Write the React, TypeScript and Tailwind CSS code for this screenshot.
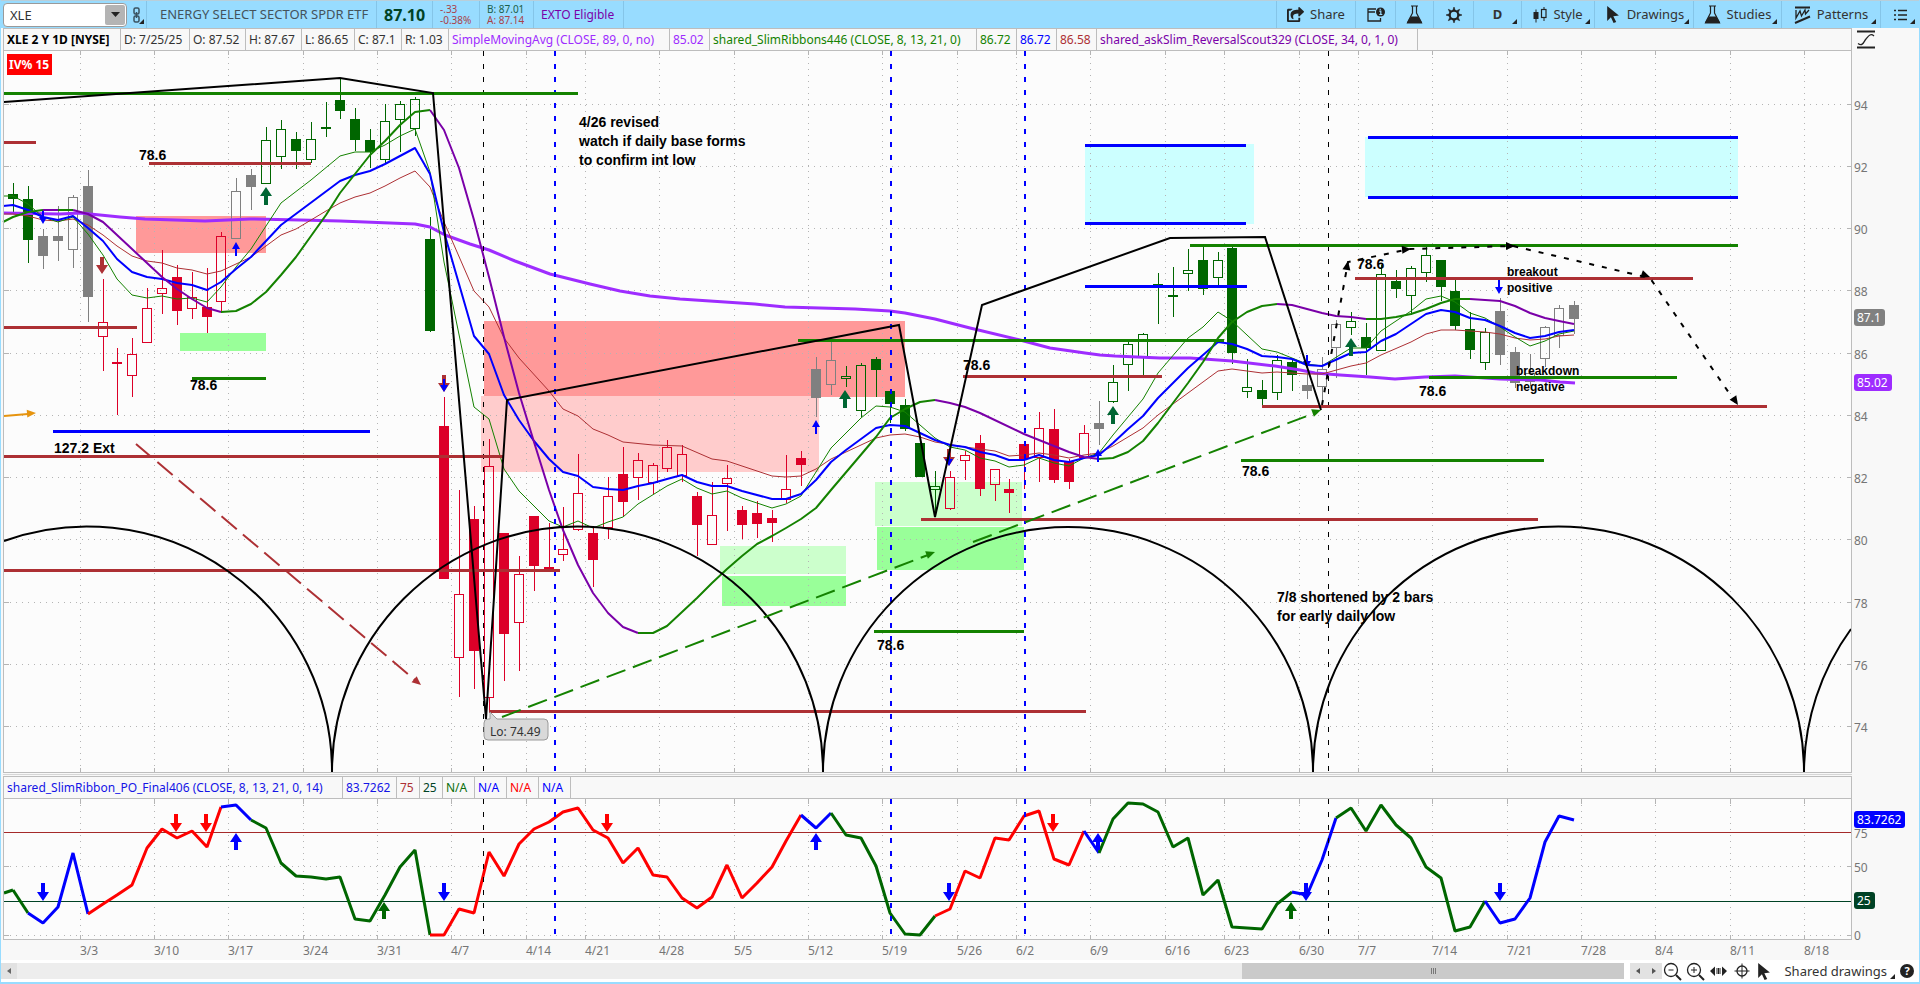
import type { ReactNode } from "react"
import { FaShareSquare } from "react-icons/fa"

const FONT = "font-['Noto_Sans','Open_Sans',sans-serif]"

const BRICK = "#ad3034"
const LEAF = "#148200"
const BLUE = "#0000ff"
const VIOLET = "#7a00a8"
const ORCHID = "#9e2cff"
const PINE = "#006600"
const CRIMSON = "#dc0028"
const GREY = "#808080"

const barX = (i: number) => 13.3 + 14.867 * i

type Kind = "G" | "g" | "R" | "r" | "N" | "n"
type Candle = [Kind, number, number, number, number]

// kind (capital = filled), high, body top, body bottom, low
const candles: Candle[] = [
  ["G", 183, 194, 199, 212], ["G", 186, 199, 240, 263], ["N", 229, 236, 256, 269], ["N", 206, 236, 241, 261],
  ["n", 195, 197, 250, 268], ["N", 170, 186, 297, 322], ["r", 279, 322, 337, 371], ["R", 348, 362, 364, 415],
  ["r", 338, 354, 376, 397], ["r", 288, 308, 343, 343], ["r", 250, 288, 294, 314], ["R", 265, 277, 311, 325],
  ["r", 272, 297, 309, 319], ["R", 268, 307, 317, 333], ["r", 232, 236, 302, 313], ["n", 178, 191, 239, 239],
  ["N", 169, 175, 187, 210], ["g", 127, 140, 184, 184], ["g", 120, 129, 157, 169], ["G", 132, 139, 151, 169],
  ["g", 122, 139, 160, 163], ["G", 102, 127, 129, 137], ["G", 78, 100, 111, 119], ["G", 108, 119, 140, 151],
  ["G", 129, 140, 152, 168], ["g", 104, 121, 160, 164], ["g", 101, 104, 120, 152], ["g", 97, 99, 129, 136],
  ["G", 217, 239, 331, 332], ["R", 397, 426, 579, 579], ["r", 490, 594, 658, 697], ["R", 506, 519, 651, 689],
  ["r", 439, 466, 698, 712], ["R", 533, 533, 634, 681], ["r", 556, 574, 623, 671], ["R", 516, 516, 566, 591],
  ["R", 523, 567, 571, 571], ["r", 507, 549, 555, 561], ["r", 454, 493, 530, 531], ["R", 527, 533, 560, 587],
  ["r", 477, 496, 528, 539], ["R", 447, 474, 502, 517], ["r", 453, 460, 478, 500], ["r", 463, 465, 483, 494],
  ["r", 440, 447, 469, 472], ["r", 445, 454, 476, 482], ["R", 492, 496, 525, 556], ["r", 482, 515, 545, 545],
  ["r", 465, 478, 484, 531], ["R", 506, 510, 525, 539], ["R", 501, 513, 524, 538], ["R", 510, 518, 523, 542],
  ["r", 455, 489, 500, 503], ["R", 451, 458, 465, 486], ["N", 357, 369, 398, 417], ["n", 341, 360, 385, 395],
  ["g", 366, 376, 379, 387], ["g", 363, 365, 411, 417], ["G", 357, 359, 370, 397], ["G", 391, 391, 404, 423],
  ["G", 399, 405, 429, 431], ["G", 443, 443, 477, 477], ["g", 471, 486, 490, 517], ["r", 471, 477, 509, 510],
  ["r", 451, 455, 461, 480], ["R", 435, 443, 489, 496], ["r", 469, 469, 485, 501], ["R", 479, 489, 493, 513],
  ["R", 444, 444, 459, 489], ["r", 412, 428, 458, 482], ["R", 409, 429, 480, 483], ["R", 459, 461, 482, 489],
  ["r", 425, 433, 458, 458], ["N", 401, 423, 429, 445], ["g", 365, 382, 402, 403], ["g", 342, 344, 365, 391],
  ["g", 333, 334, 357, 376], ["G", 273, 284, 285, 324], ["G", 267, 295, 297, 317], ["g", 249, 270, 274, 291],
  ["G", 246, 260, 289, 295], ["g", 252, 260, 278, 285], ["G", 246, 248, 353, 364], ["g", 359, 387, 392, 398],
  ["G", 380, 390, 399, 407], ["g", 355, 360, 393, 400], ["G", 360, 362, 375, 391], ["N", 373, 385, 391, 399],
  ["n", 357, 369, 387, 407], ["n", 320, 324, 348, 378], ["g", 312, 321, 328, 335], ["G", 323, 337, 348, 375],
  ["g", 265, 274, 351, 351], ["G", 270, 281, 289, 298], ["g", 266, 268, 296, 315], ["g", 246, 255, 273, 282],
  ["G", 260, 260, 287, 301], ["G", 280, 291, 326, 330], ["G", 312, 329, 350, 359], ["g", 328, 332, 363, 370],
  ["N", 298, 311, 355, 365], ["N", 347, 352, 383, 388], ["n", 354, 373, 382, 386], ["n", 326, 327, 359, 367],
  ["n", 305, 308, 336, 348], ["N", 301, 305, 319, 334],
]

type Pt = [number, number]

const sma89: Pt[] = [
  [3, 213], [60, 214], [80, 213], [120, 217], [145, 219], [205, 221], [250, 219], [300, 220], [340, 221], [415, 224],
  [430, 227], [445, 235], [470, 244], [489, 250], [515, 261], [550, 274], [590, 284], [620, 291], [650, 296],
  [680, 299], [755, 304], [785, 307], [855, 309], [890, 311], [905, 313], [935, 319], [970, 328], [1020, 340],
  [1050, 348], [1085, 353], [1100, 355], [1115, 356], [1160, 358], [1190, 358], [1232, 361], [1275, 366],
  [1300, 370], [1315, 373], [1340, 375], [1370, 377], [1395, 379], [1425, 377], [1455, 376], [1500, 379],
  [1540, 380], [1560, 382], [1575, 383],
]

// bar index, y
const fast: Pt[] = [
  [-0.7, 196], [0, 196], [1, 204], [2, 217], [3, 222], [4, 217], [5, 234], [6, 255], [7, 279], [8, 295], [9, 298],
  [10, 296], [11, 299], [12, 298], [13, 302], [14, 287], [15, 267], [16, 249], [17, 226], [18, 203], [20, 180],
  [22, 156], [23, 152], [24, 152], [25, 145], [26, 136], [27, 129], [28, 172], [29, 262], [31, 407], [32, 419],
  [33, 469], [34, 491], [36, 521], [37, 527], [38, 521], [39, 528], [40, 522], [41, 517], [42, 504], [44, 486],
  [45, 479], [46, 488], [47, 494], [48, 491], [49, 498], [51, 508], [52, 504], [53, 496], [54, 472], [55, 448],
  [57, 418], [58, 406], [59, 407], [60, 412], [61, 425], [62, 438], [63, 447], [64, 450], [65, 458], [66, 461],
  [67, 467], [68, 465], [69, 458], [70, 463], [71, 466], [72, 458], [73, 453], [74, 435], [75, 417], [76, 399],
  [77, 373], [79, 338], [80, 327], [81, 312], [82, 321], [84, 349], [85, 352], [86, 358], [87, 364], [88, 366],
  [90, 348], [91, 348], [92, 331], [94, 311], [95, 299], [96, 296], [97, 302], [98, 313], [99, 318], [100, 327],
  [101, 337], [102, 346], [103, 341], [104, 334], [105, 331],
]

const mid: Pt[] = [
  [-0.7, 206], [0, 205], [1, 210], [2, 217], [3, 220], [4, 216], [5, 228], [6, 241], [7, 259], [8, 272], [9, 277],
  [10, 279], [11, 283], [12, 285], [13, 290], [14, 282], [15, 269], [16, 257], [17, 241], [18, 225], [22, 181],
  [23, 175], [24, 171], [25, 164], [26, 156], [27, 148], [28, 174], [29, 232], [31, 336], [32, 354], [33, 395],
  [34, 420], [35, 441], [36, 459], [37, 472], [38, 476], [39, 487], [40, 489], [41, 490], [42, 486], [43, 483],
  [44, 479], [45, 475], [46, 482], [47, 486], [48, 486], [49, 491], [51, 499], [52, 499], [53, 494], [54, 480],
  [55, 462], [56, 450], [57, 439], [58, 428], [59, 425], [60, 426], [61, 433], [62, 440], [63, 445], [64, 447],
  [65, 452], [66, 455], [67, 460], [68, 460], [69, 455], [70, 460], [71, 462], [72, 458], [73, 455], [74, 443],
  [75, 429], [76, 416], [77, 398], [78, 383], [79, 368], [80, 355], [81, 342], [82, 344], [83, 349], [84, 356],
  [85, 357], [86, 359], [87, 365], [88, 366], [90, 353], [91, 352], [92, 341], [93, 334], [95, 314], [96, 310],
  [97, 312], [98, 318], [99, 320], [100, 326], [101, 333], [102, 338], [103, 336], [104, 332], [105, 330],
]

const slow: Pt[] = [
  [-0.7, 214], [0, 214], [1, 216], [2, 220], [3, 221], [4, 219], [5, 225], [6, 235], [7, 246], [8, 256], [9, 261],
  [10, 263], [11, 268], [12, 270], [13, 274], [14, 271], [15, 264], [16, 257], [17, 246], [18, 235], [19, 229],
  [20, 220], [21, 211], [22, 203], [23, 197], [24, 193], [25, 186], [26, 178], [27, 171], [28, 187], [29, 222],
  [31, 291], [32, 307], [33, 338], [34, 358], [36, 391], [37, 409], [38, 416], [39, 429], [40, 435], [41, 442],
  [43, 445], [45, 446], [47, 459], [48, 461], [51, 476], [52, 477], [53, 476], [54, 469], [55, 459], [58, 438],
  [59, 435], [60, 434], [61, 437], [62, 442], [64, 447], [65, 449], [66, 451], [67, 456], [68, 455], [69, 453],
  [70, 455], [71, 458], [72, 455], [73, 453], [74, 446], [76, 428], [77, 415], [78, 404], [79, 393], [80, 382],
  [81, 371], [82, 369], [84, 373], [85, 372], [87, 374], [88, 374], [90, 366], [91, 363], [92, 355], [94, 342],
  [95, 334], [96, 330], [97, 330], [98, 331], [99, 332], [100, 334], [101, 338], [102, 340], [103, 339],
  [104, 336], [105, 335],
]

const scout: { up: boolean; pts: Pt[] }[] = [
  { up: true, pts: [[-0.7, 222], [0, 217], [1, 212], [2, 210]] },
  { up: false, pts: [[2, 210], [3, 210]] },
  { up: true, pts: [[3, 210], [4, 210]] },
  { up: false, pts: [[4, 210], [5, 214], [6, 222], [7, 235], [8, 249], [9, 263], [10, 277], [11, 289], [12, 299], [13, 308], [14, 312]] },
  { up: true, pts: [[14, 312], [15, 311], [16, 304], [17, 292], [18, 275], [19, 257], [20, 236], [21, 215], [22, 193], [23, 174], [24, 155], [25, 141], [26, 125], [27, 112], [28, 110]] },
  { up: false, pts: [[28, 110], [29, 130], [30, 168], [31, 220], [32, 277], [33, 337], [34, 393], [35, 442], [36, 490], [37, 530], [38, 565], [39, 593], [40, 613], [41, 627], [42, 633]] },
  { up: true, pts: [[42, 633], [43, 633], [44, 626], [45, 612], [46, 598], [47, 583], [48, 569], [49, 556], [50, 544], [51, 536], [52, 528], [53, 519], [54, 508], [55, 490], [58, 437], [59, 418], [60, 409], [61, 402], [62, 400]] },
  { up: false, pts: [[62, 400], [63, 403], [64, 407], [65, 413], [68, 434], [71, 452], [72, 457], [73, 459]] },
  { up: true, pts: [[73, 459], [74, 458], [75, 452], [76, 441], [77, 423], [78, 403], [79, 383], [80, 362], [81, 338], [82, 322], [83, 312], [84, 306], [85, 304]] },
  { up: false, pts: [[85, 304], [86, 305], [87, 309], [88, 313], [89, 316], [90, 317], [91, 319]] },
  { up: true, pts: [[91, 319], [92, 319], [93, 317], [94, 314], [95, 309], [96, 303], [97, 299], [98, 299]] },
  { up: false, pts: [[98, 299], [99, 300], [100, 301], [101, 306], [102, 313], [103, 318], [104, 321], [105, 324]] },
]

// x, y, width, height, fill
const zones: [number, number, number, number, string][] = [
  [136, 216, 130, 37, "#ff9999"],
  [484, 321, 421, 76, "#ff9999"],
  [481, 396, 338, 76, "#ffcccc"],
  [180, 333, 86, 18, "#99ff99"],
  [720, 546, 126, 28, "#ccffcc"],
  [722, 576, 124, 30, "#99ff99"],
  [875, 482, 147, 44, "#ccffcc"],
  [877, 527, 147, 43, "#99ff99"],
  [1085, 144, 169, 80, "#ccffff"],
  [1365, 137, 373, 60, "#ccffff"],
]

// x1, x2, y, colour
const levels: [number, number, number, string][] = [
  [4, 578, 93, LEAF], [4, 36, 142, BRICK], [149, 311, 163, BRICK], [4, 137, 327, BRICK], [192, 266, 378, LEAF],
  [53, 370, 431, BLUE], [4, 503, 456, BRICK], [4, 560, 570, BRICK], [798, 1224, 340, LEAF], [963, 1162, 376, BRICK],
  [921, 1538, 519, BRICK], [489, 1086, 711, BRICK], [874, 1024, 631, LEAF], [1262, 1767, 406, BRICK],
  [1241, 1544, 460, LEAF], [1355, 1693, 278, BRICK], [1190, 1738, 245, LEAF], [1429, 1677, 377, LEAF],
  [1085, 1246, 145, BLUE], [1085, 1246, 223, BLUE], [1085, 1247, 286, BLUE], [1368, 1738, 137, BLUE],
  [1368, 1738, 197, BLUE],
]

const notes: [number, number, string][] = [
  [139, 160, "78.6"], [190, 390, "78.6"], [54, 453, "127.2 Ext"], [579, 127, "4/26 revised"],
  [579, 146, "watch if daily base forms"], [579, 165, "to confirm int low"], [963, 370, "78.6"],
  [877, 650, "78.6"], [1242, 476, "78.6"], [1357, 269, "78.6"], [1419, 396, "78.6"],
  [1277, 602, "7/8 shortened by 2 bars"], [1277, 621, "for early daily low"],
]

const smallNotes: [number, number, string][] = [
  [1507, 276, "breakout"], [1507, 292, "positive"], [1516, 375, "breakdown"], [1516, 391, "negative"],
]

const dates: [number, string][] = [
  [80, "3/3"], [154, "3/10"], [228, "3/17"], [303, "3/24"], [377, "3/31"], [451, "4/7"], [526, "4/14"],
  [585, "4/21"], [659, "4/28"], [734, "5/5"], [808, "5/12"], [882, "5/19"], [957, "5/26"], [1016, "6/2"],
  [1090, "6/9"], [1165, "6/16"], [1224, "6/23"], [1299, "6/30"], [1358, "7/7"], [1432, "7/14"], [1507, "7/21"],
  [1581, "7/28"], [1655, "8/4"], [1730, "8/11"], [1804, "8/18"],
]

const prices: [number, string][] = [
  [104, "94"], [166, "92"], [228, "90"], [290, "88"], [353, "86"], [415, "84"], [477, "82"], [539, "80"],
  [602, "78"], [664, "76"], [726, "74"],
]

const po = [
  890, 913, 923, 907, 853, 914, 904, 895, 885, 848, 829, 838, 831, 847, 807, 805, 820, 828, 863, 876, 877, 879, 877,
  919, 921, 895, 867, 850, 935, 935, 909, 913, 852, 876, 844, 829, 822, 812, 808, 830, 838, 863, 848, 875, 877, 898,
  908, 897, 865, 898, 883, 867, 841, 815, 828, 813, 835, 838, 866, 913, 934, 935, 916, 909, 871, 878, 838, 840, 816,
  811, 859, 865, 831, 853, 819, 803, 804, 812, 847, 838, 895, 880, 927, 928, 929, 904, 892, 895, 860, 818, 808, 831,
  805, 825, 838, 867, 878, 931, 927, 901, 923, 919, 898, 842, 816, 820,
]

// first bar, last bar, colour
const poRuns: [number, number, string][] = [
  [0, 1, PINE], [1, 5, BLUE], [5, 14, "#ff0000"], [14, 16, BLUE], [16, 28, PINE], [28, 53, "#ff0000"], [53, 55, BLUE],
  [55, 62, PINE], [62, 72, "#ff0000"], [72, 73, BLUE], [73, 86, PINE], [86, 89, BLUE], [89, 99, PINE], [99, 105, BLUE],
]

const kindColor = (k: Kind) => (k === "G" || k === "g" ? PINE : k === "R" || k === "r" ? CRIMSON : GREY)
const join = (pts: Pt[]) => pts.map((p) => p.join(",")).join(" ")
const byBar = (pts: Pt[]) => join(pts.map(([i, y]) => [Math.round(barX(i)), y] as Pt))

function CandleMark({ i, c }: { i: number; c: Candle }) {
  const [kind, high, top, bottom, low] = c
  const x = Math.round(barX(i))
  const color = kindColor(kind)
  const filled = kind === kind.toUpperCase()
  return (
    <g shapeRendering="crispEdges">
      {top > high && <rect x={x} y={high} width={1} height={top - high} fill={color} />}
      {low > bottom && <rect x={x} y={bottom} width={1} height={low - bottom} fill={color} />}
      {filled ? (
        <rect x={x - 5} y={top} width={10} height={Math.max(bottom - top, 1)} fill={color} />
      ) : (
        <rect x={x - 4.5} y={top + 0.5} width={9} height={bottom - top - 1} fill="none" stroke={color} />
      )}
    </g>
  )
}

function Signal({ x, y, h, dir, color, thin }: { x: number; y: number; h: number; dir: "up" | "down"; color: string; thin?: boolean }) {
  const w = thin ? 4 : 6
  const s = thin ? 1 : 2
  const head = thin ? 7 : 9
  const d =
    dir === "up"
      ? `M${x} ${y}L${x + w} ${y + head}H${x + s}V${y + h}H${x - s}V${y + head}H${x - w}Z`
      : `M${x} ${y + h}L${x + w} ${y + h - head}H${x + s}V${y}H${x - s}V${y + h - head}H${x - w}Z`
  return <path d={d} fill={color} />
}

function Head({ x, y, angle, color }: { x: number; y: number; angle: number; color: string }) {
  return <path d="M0 0L-9 -4V4Z" fill={color} transform={`translate(${x} ${y}) rotate(${angle})`} />
}

function Badge({ x, y, w, fill, label }: { x: number; y: number; w: number; fill: string; label: string }) {
  return (
    <g>
      <rect x={x} y={y} width={w} height={17} rx={3} fill={fill} />
      <text x={x + 3} y={y + 13} fill="#ffffff" fontSize={12}>
        {label}
      </text>
    </g>
  )
}

function TimeMarks({ y1, y2 }: { y1: number; y2: number }) {
  return (
    <g strokeDasharray="5 8">
      {[483, 1328].map((x) => (
        <line key={x} x1={x + 0.5} x2={x + 0.5} y1={y1} y2={y2} stroke="#000000" />
      ))}
      {[555, 891, 1025].map((x) => (
        <line key={x} x1={x} x2={x} y1={y1} y2={y2} stroke={BLUE} strokeWidth={2} />
      ))}
    </g>
  )
}

function PriceChart() {
  return (
    <svg viewBox="1 51 1918 725" className={`block h-auto w-full ${FONT}`} role="img" aria-label="XLE daily price">
      <rect x={3} y={51} width={1848} height={721} fill="#fcfcfc" />
      {zones.map(([x, y, w, h, fill]) => (
        <rect key={`${x}-${y}`} x={x} y={y} width={w} height={h} fill={fill} />
      ))}
      <g stroke="#b4b4b4" shapeRendering="crispEdges">
        {dates.map(([x]) => (
          <g key={x}>
            <line x1={x + 0.5} x2={x + 0.5} y1={57} y2={768} strokeDasharray="1 5" />
            <line x1={x + 0.5} x2={x + 0.5} y1={51} y2={55} />
            <line x1={x + 0.5} x2={x + 0.5} y1={768} y2={772} />
          </g>
        ))}
        {prices.map(([y]) => (
          <g key={y}>
            <line x1={10} x2={1842} y1={y + 0.5} y2={y + 0.5} strokeDasharray="1 5" />
            <line x1={4} x2={9} y1={y + 0.5} y2={y + 0.5} />
            <line x1={1847} x2={1851} y1={y + 0.5} y2={y + 0.5} />
          </g>
        ))}
      </g>

      {candles.map((c, i) => (
        <CandleMark key={i} i={i} c={c} />
      ))}

      <g fill="none" strokeLinejoin="round">
        <polyline points={join(sma89)} stroke={ORCHID} strokeWidth={3} />
        <polyline points={byBar(slow)} stroke={BRICK} strokeWidth={1} />
        <polyline points={byBar(fast)} stroke={LEAF} strokeWidth={1} />
        <polyline points={byBar(mid)} stroke={BLUE} strokeWidth={2} />
        {scout.map((s, i) => (
          <polyline key={i} points={byBar(s.pts)} stroke={s.up ? LEAF : VIOLET} strokeWidth={2} />
        ))}
      </g>

      <Signal x={43} y={211} h={13} dir="down" color={BLUE} thin />
      <Signal x={102} y={257} h={17} dir="down" color={BRICK} />
      <Signal x={266} y={187} h={18} dir="up" color="#006633" />
      <Signal x={236} y={242} h={14} dir="up" color={BLUE} thin />
      <Signal x={444} y={375} h={17} dir="down" color={BRICK} />
      <Signal x={444} y={379} h={13} dir="down" color={BLUE} thin />
      <Signal x={845} y={390} h={18} dir="up" color="#006633" />
      <Signal x={816} y={420} h={14} dir="up" color={BLUE} thin />
      <Signal x={949} y={449} h={17} dir="down" color={BRICK} />
      <Signal x={949} y={453} h={13} dir="down" color={BLUE} thin />
      <Signal x={1098} y={449} h={13} dir="up" color={BLUE} thin />
      <Signal x={1113} y={406} h={18} dir="up" color="#006633" />
      <Signal x={1307} y={355} h={13} dir="down" color={BLUE} thin />
      <Signal x={1351} y={338} h={18} dir="up" color="#006633" />
      <Signal x={1499} y={280} h={14} dir="down" color={BLUE} thin />

      <TimeMarks y1={51} y2={772} />

      <g shapeRendering="crispEdges">
        {levels.map(([x1, x2, y, color]) => (
          <rect key={`${x1}-${y}`} x={x1} y={y - 1} width={x2 - x1} height={3} fill={color} />
        ))}
      </g>

      <g fill="none" stroke="#000000" strokeWidth={2}>
        <path d="M4 541A245 245 0 0 1 332 772A245 245 0 0 1 823 772A245 245 0 0 1 1313 772A245 245 0 0 1 1804 772A245 245 0 0 1 1851 629" />
        <polyline points="4,102 340,78 433,93 486,719 507,400 899,325 935,517 982,305 1170,238 1265,237 1321,410" />
        <polyline points="1322,405 1348,262 1410,249 1513,246 1650,278 1738,406" strokeDasharray="5 8" />
      </g>
      <Head x={1348} y={261} angle={-80} color="#000000" />
      <Head x={1411} y={249} angle={-5} color="#000000" />
      <Head x={1515} y={246} angle={0} color="#000000" />
      <Head x={1650} y={277} angle={20} color="#000000" />
      <Head x={1738} y={405} angle={56} color="#000000" />

      <g fill="none" strokeWidth={2} strokeDasharray="20 8">
        <line x1={136} y1={444} x2={415} y2={680} stroke={BRICK} />
        <line x1={502} y1={717} x2={928} y2={555} stroke={LEAF} />
        <line x1={973} y1={542} x2={1315} y2={413} stroke={LEAF} />
      </g>
      <Head x={421} y={685} angle={40} color={BRICK} />
      <Head x={935} y={552} angle={-20} color={LEAF} />
      <Head x={1321} y={410} angle={-20} color={LEAF} />
      <line x1={4} y1={416} x2={28} y2={414} stroke="#e6940f" strokeWidth={2} />
      <Head x={36} y={413} angle={-4} color="#e6940f" />

      <g className="font-['Liberation_Sans',Arial,sans-serif]" fontWeight={700} fill="#000000">
        {notes.map(([x, y, t]) => (
          <text key={`${x}-${y}`} x={x} y={y} fontSize={14}>
            {t}
          </text>
        ))}
        {smallNotes.map(([x, y, t]) => (
          <text key={`${x}-${y}`} x={x} y={y} fontSize={12}>
            {t}
          </text>
        ))}
      </g>

      <path
        d="M488 719H490L490 712L497 719H544A4 4 0 0 1 548 723V736A4 4 0 0 1 544 740H488A4 4 0 0 1 484 736V723A4 4 0 0 1 488 719Z"
        fill="#d9d9d9"
        stroke="#9a9a9a"
      />
      <text x={490} y={736} fontSize={12} fill="#333333">
        Lo: 74.49
      </text>

      <rect x={7} y={54} width={45} height={21} fill="#ff0000" />
      <text x={9} y={69} fontSize={12} fontWeight={700} fill="#ffffff">
        IV% 15
      </text>

      <g stroke="#bdbdbd" shapeRendering="crispEdges">
        <line x1={3.5} x2={3.5} y1={51} y2={772} />
        <line x1={1851.5} x2={1851.5} y1={51} y2={772} />
        <line x1={3} x2={1852} y1={772.5} y2={772.5} />
        <line x1={3} x2={1852} y1={774.5} y2={774.5} stroke="#d6d6d6" />
      </g>
      <g fill="#757575" fontSize={12}>
        {prices.map(([y, t]) => (
          <text key={t} x={1854} y={y + 6}>
            {t}
          </text>
        ))}
      </g>
      <Badge x={1854} y={309} w={31} fill="#808080" label="87.1" />
      <Badge x={1854} y={374} w={38} fill={ORCHID} label="85.02" />
    </svg>
  )
}

function OscillatorChart() {
  const seg = (a: number, b: number) =>
    join(po.slice(a, b + 1).map((y, k) => [Math.round(barX(a + k)), y] as Pt))
  return (
    <svg viewBox="1 799 1918 161" className={`block h-auto w-full ${FONT}`} role="img" aria-label="SlimRibbon PO">
      <rect x={3} y={799} width={1848} height={140} fill="#fcfcfc" />
      <g stroke="#b4b4b4" shapeRendering="crispEdges">
        {dates.map(([x]) => (
          <g key={x}>
            <line x1={x + 0.5} x2={x + 0.5} y1={805} y2={935} strokeDasharray="1 5" />
            <line x1={x + 0.5} x2={x + 0.5} y1={799} y2={804} />
            <line x1={x + 0.5} x2={x + 0.5} y1={935} y2={939} />
          </g>
        ))}
        {[866, 935].map((y) => (
          <g key={y}>
            <line x1={10} x2={1842} y1={y + 0.5} y2={y + 0.5} strokeDasharray="1 5" />
            <line x1={4} x2={9} y1={y + 0.5} y2={y + 0.5} />
            <line x1={1847} x2={1851} y1={y + 0.5} y2={y + 0.5} />
          </g>
        ))}
        <line x1={4} x2={1851} y1={832.5} y2={832.5} stroke="#a52a2a" />
        <line x1={4} x2={1851} y1={901.5} y2={901.5} stroke="#004225" />
      </g>
      <g fill="none" strokeWidth={3} strokeLinejoin="bevel">
        <polyline points="4,893 13,890" stroke={PINE} />
        {poRuns.map(([a, b, color]) => (
          <polyline key={a} points={seg(a, b)} stroke={color} />
        ))}
      </g>
      {[11, 13, 40, 70].map((i) => (
        <Signal key={i} x={Math.floor(barX(i))} y={814} h={18} dir="down" color="#ff0000" />
      ))}
      {[15, 54, 73].map((i) => (
        <Signal key={i} x={Math.floor(barX(i))} y={833} h={17} dir="up" color={BLUE} />
      ))}
      {[2, 29, 63, 87, 100].map((i) => (
        <Signal key={i} x={Math.floor(barX(i))} y={883} h={18} dir="down" color={BLUE} />
      ))}
      {[25, 86].map((i) => (
        <Signal key={i} x={Math.floor(barX(i))} y={902} h={17} dir="up" color={PINE} />
      ))}
      <TimeMarks y1={799} y2={935} />
      <g stroke="#bdbdbd" shapeRendering="crispEdges">
        <line x1={3.5} x2={3.5} y1={799} y2={939} />
        <line x1={1851.5} x2={1851.5} y1={799} y2={939} />
        <line x1={3} x2={1852} y1={939.5} y2={939.5} />
      </g>
      <g fill="#757575" fontSize={12}>
        <text x={1854} y={838}>75</text>
        <text x={1854} y={872}>50</text>
        <text x={1854} y={940}>0</text>
        {dates.map(([x, t]) => (
          <text key={t} x={x} y={955}>
            {t}
          </text>
        ))}
      </g>
      <Badge x={1854} y={811} w={51} fill={BLUE} label="83.7262" />
      <Badge x={1854} y={892} w={21} fill="#004225" label="25" />
    </svg>
  )
}

function Flask() {
  return (
    <svg width="17" height="19" viewBox="0 0 17 19" aria-hidden="true">
      <path d="M5 1h7M6.500 1v7L1.500 17.500h14L10.500 8V1" fill="none" stroke="#222" strokeWidth="1.200" strokeLinejoin="round" />
      <path d="M4.800 11.500h7.400L16.500 18.500H0.500z" fill="#222" />
    </svg>
  )
}

function Cursor({ size }: { size: number }) {
  return (
    <svg width={size} height={size} viewBox="0 0 16 16" aria-hidden="true">
      <path d="M3 0L14 9L8.800 9.600L11.500 15L9 16L6.500 10.600L3 14Z" fill="#222" />
    </svg>
  )
}

function InfoWindow() {
  return (
    <svg width="18" height="16" viewBox="0 0 18 16" aria-hidden="true">
      <path d="M9 2H1v12h12.500v-3M1 5H8" fill="none" stroke="#222" strokeWidth="1.300" />
      <circle cx="13.500" cy="5" r="4.500" fill="#222" />
      <path d="M12.300 4.200h1.500V7.500M12.300 7.500h3M13.200 1.800v1.200" stroke="#98dcff" fill="none" strokeWidth="1.200" />
    </svg>
  )
}

function Gear() {
  return (
    <svg width="16" height="16" viewBox="0 0 16 16" aria-hidden="true">
      <circle cx="8" cy="8" r="4.200" fill="none" stroke="#222" strokeWidth="2" />
      {[0, 45, 90, 135].map((a) => (
        <path key={a} d="M8 0L9.300 3.500H6.700ZM8 16L6.700 12.500H9.300Z" fill="#222" stroke="#222" strokeWidth="0.600" transform={`rotate(${a} 8 8)`} />
      ))}
    </svg>
  )
}

function CandlesIcon() {
  return (
    <svg width="14" height="16" viewBox="0 0 14 16" aria-hidden="true">
      <path d="M3 2.500v13M11 0v2.500M11 10.500v3.500" stroke="#222" />
      <rect x="0.500" y="5" width="5" height="7" fill="#222" />
      <rect x="8.500" y="2.500" width="4.500" height="8" fill="none" stroke="#222" strokeWidth="1.200" />
    </svg>
  )
}

function PatternsIcon() {
  return (
    <svg width="17" height="18" viewBox="0 0 17 18" aria-hidden="true">
      <path d="M1 1.500h15" stroke="#222" strokeWidth="2" />
      <path d="M1 17L16 10.500" stroke="#222" strokeWidth="2" />
      <path d="M2 4v8l4-7 1.500 5L11 4l.5 4L15 4" fill="none" stroke="#222" strokeWidth="1.300" />
    </svg>
  )
}

function ListIcon() {
  return (
    <svg width="13" height="12" viewBox="0 0 13 12" aria-hidden="true">
      <path d="M0 1.500h2M0 6h2M0 10.500h2M4 1.500h9M4 6h9M4 10.500h9" stroke="#222" strokeWidth="1.500" />
    </svg>
  )
}

function Corner({ className }: { className?: string }) {
  return (
    <svg width="5" height="5" viewBox="0 0 5 5" className={className} aria-hidden="true">
      <path d="M5 0V5H0Z" fill="#222" />
    </svg>
  )
}

function Tool({ w, label, menu, children }: { w: string; label: string; menu?: boolean; children: ReactNode }) {
  return (
    <button
      type="button"
      aria-label={label}
      className={`relative flex h-full shrink-0 items-center justify-center gap-1.5 border-l border-[#85c5e8] text-[13px] text-[#333] ${w}`}
    >
      {children}
      {menu && <Corner className="absolute right-1 bottom-1" />}
    </button>
  )
}

function Toolbar() {
  return (
    <header className="flex h-7 items-center border-t border-[#b9cfda] bg-[#98dcff]">
      <div className="ml-0.5 flex h-6 w-[124px] shrink-0 items-center rounded-sm border border-[#9a9a9a] bg-white p-px">
        <input
          aria-label="Symbol"
          defaultValue="XLE"
          className="min-w-0 flex-1 bg-transparent pl-[5px] text-[13px] leading-5 text-[#333] outline-none"
        />
        <button type="button" aria-label="Choose symbol" className="flex h-full w-5 items-center justify-center rounded-xs bg-[#b4b4b4]">
          <svg width="9" height="5" viewBox="0 0 9 5" aria-hidden="true">
            <path d="M0 0H9L4.500 5Z" fill="#222" />
          </svg>
        </button>
      </div>
      <button type="button" aria-label="Link symbol" className="relative flex h-full w-[19px] shrink-0 items-center justify-center">
        <svg width="8" height="16" viewBox="0 0 8 16" aria-hidden="true">
          <g fill="none" stroke="#3a5260" strokeWidth="1.500">
            <rect x="1" y="1" width="5" height="6" rx="1.500" />
            <rect x="1" y="9" width="5" height="6" rx="1.500" />
            <path d="M3.500 5v6" />
          </g>
        </svg>
        <Corner className="absolute right-0.5 bottom-1" />
      </button>
      <div className="flex h-full w-[230px] shrink-0 items-center border-l border-[#85c5e8] pl-[13px] text-[13px] whitespace-nowrap text-[#44535c]">
        ENERGY SELECT SECTOR SPDR ETF
      </div>
      <div className="flex h-full w-[56px] shrink-0 items-center border-l border-[#85c5e8] pl-[7px] text-base font-bold text-[#004225]">
        87.10
      </div>
      <div className="flex h-full w-[47px] shrink-0 flex-col justify-center border-l border-[#85c5e8] pl-[7px] text-[10px] leading-[11px] text-[#a8434a]">
        <span>-.33</span>
        <span>-0.38%</span>
      </div>
      <div className="flex h-full w-[54px] shrink-0 flex-col justify-center border-l border-[#85c5e8] pl-[7px] text-[10px] leading-[11px]">
        <span className="text-[#1b5e4a]">B: 87.01</span>
        <span className="text-[#a8434a]">A: 87.14</span>
      </div>
      <div className="flex h-full w-[91px] shrink-0 items-center border-x border-[#85c5e8] pl-[7px] text-xs whitespace-nowrap text-[#7a00a8]">
        EXTO Eligible
      </div>
      <div className="ml-auto flex h-full shrink-0">
        <Tool w="w-[79px]" label="Share">
          <FaShareSquare size={17} color="#222" />
          Share
        </Tool>
        <Tool w="w-10" label="Info">
          <InfoWindow />
        </Tool>
        <Tool w="w-[38px]" label="Edit studies">
          <Flask />
        </Tool>
        <Tool w="w-10" label="Settings">
          <Gear />
        </Tool>
        <Tool w="w-12" label="Timeframe" menu>
          <span className="font-bold">D</span>
        </Tool>
        <Tool w="w-[73px]" label="Style" menu>
          <CandlesIcon />
          Style
        </Tool>
        <Tool w="w-[99px]" label="Drawings" menu>
          <Cursor size={17} />
          Drawings
        </Tool>
        <Tool w="w-[88px]" label="Studies" menu>
          <Flask />
          Studies
        </Tool>
        <Tool w="w-[99px]" label="Patterns" menu>
          <PatternsIcon />
          Patterns
        </Tool>
        <Tool w="w-[39px]" label="More" menu>
          <ListIcon />
        </Tool>
      </div>
    </header>
  )
}

// label, classes
const priceCells: [string, string][] = [
  ["XLE 2 Y 1D [NYSE]", "w-[117px] font-bold text-black"],
  ["D: 7/25/25", "w-[69px] text-[#333]"],
  ["O: 87.52", "w-[56px] text-[#333]"],
  ["H: 87.67", "w-[56px] text-[#333]"],
  ["L: 86.65", "w-[53px] text-[#333]"],
  ["C: 87.1", "w-[47px] text-[#333]"],
  ["R: 1.03", "w-[47px] text-[#333]"],
  ["SimpleMovingAvg (CLOSE, 89, 0, no)", "w-[221px] text-[#9e2cff]"],
  ["85.02", "w-10 text-[#9e2cff]"],
  ["shared_SlimRibbons446 (CLOSE, 8, 13, 21, 0)", "w-[267px] text-[#148200]"],
  ["86.72", "w-10 text-[#148200]"],
  ["86.72", "w-10 text-[#0000ff]"],
  ["86.58", "w-10 text-[#ad3034]"],
  ["shared_askSlim_ReversalScout329 (CLOSE, 34, 0, 1, 0)", "w-[321px] text-[#7a00a8]"],
]

const poCells: [string, string][] = [
  ["shared_SlimRibbon_PO_Final406 (CLOSE, 8, 13, 21, 0, 14)", "w-[339px] text-[#1414e6]"],
  ["83.7262", "w-[54px] text-[#1414e6]"],
  ["75", "w-[23px] text-[#ad3034]"],
  ["25", "w-[23px] text-[#004225]"],
  ["N/A", "w-8 text-[#0a6e0a]"],
  ["N/A", "w-8 text-[#0000ff]"],
  ["N/A", "w-8 text-[#ff0000]"],
  ["N/A", "w-8 text-[#0000ff]"],
]

function StudyStrip({ cells, children }: { cells: [string, string][]; children?: ReactNode }) {
  return (
    <div className="flex h-[23px] bg-[#f8f8f8] pl-0.5">
      <div className="flex min-w-0 flex-1 overflow-hidden border border-[#bdbdbd] text-xs">
        {cells.map(([label, cls], i) => (
          <span key={i} className={`flex shrink-0 items-center border-r border-[#bdbdbd] pl-[3px] whitespace-nowrap ${cls}`}>
            {label}
          </span>
        ))}
      </div>
      <div className="flex w-[67px] shrink-0 items-center pl-[5px]">{children}</div>
    </div>
  )
}

function BottomBar() {
  return (
    <footer className="flex h-6 items-center border-b-2 border-[#98dcff] bg-white">
      <div className="flex h-4 min-w-0 flex-1 bg-[#ededed]">
        <button type="button" aria-label="Scroll left" className="flex w-4 items-center justify-center bg-[#e2e2e2]">
          <svg width="4" height="6" viewBox="0 0 4 6" aria-hidden="true">
            <path d="M4 0V6L0 3Z" fill="#666" />
          </svg>
        </button>
        <div className="min-w-0 flex-1" />
        <div className="flex w-[382px] shrink-0 items-center justify-center gap-px bg-[#cacaca]">
          <span className="h-1.5 w-px bg-[#777]" />
          <span className="h-1.5 w-px bg-[#777]" />
          <span className="h-1.5 w-px bg-[#777]" />
        </div>
      </div>
      <div className="ml-[6px] flex h-4 w-8 shrink-0 bg-[#e2e2e2]">
        <button type="button" aria-label="Step left" className="flex flex-1 items-center justify-center">
          <svg width="4" height="6" viewBox="0 0 4 6" aria-hidden="true">
            <path d="M4 0V6L0 3Z" fill="#555" />
          </svg>
        </button>
        <button type="button" aria-label="Step right" className="flex flex-1 items-center justify-center">
          <svg width="4" height="6" viewBox="0 0 4 6" aria-hidden="true">
            <path d="M0 0V6L4 3Z" fill="#555" />
          </svg>
        </button>
      </div>
      <div className="flex shrink-0 items-center gap-1 pl-px">
        <button type="button" aria-label="Zoom out">
          <svg width="19" height="19" viewBox="0 0 19 19" fill="none" stroke="#222" aria-hidden="true">
            <circle cx="8" cy="8" r="6.500" strokeWidth="1.300" />
            <path d="M5.500 8h5" />
            <path d="M13 13l5 5" strokeWidth="2" />
          </svg>
        </button>
        <button type="button" aria-label="Zoom in">
          <svg width="19" height="19" viewBox="0 0 19 19" fill="none" stroke="#222" aria-hidden="true">
            <circle cx="8" cy="8" r="6.500" strokeWidth="1.300" />
            <path d="M5 8h6M8 5v6" />
            <path d="M13 13l5 5" strokeWidth="2" />
          </svg>
        </button>
        <button type="button" aria-label="Fit width">
          <svg width="19" height="12" viewBox="0 0 19 12" aria-hidden="true">
            <path d="M1 6L6 1.500V11ZM18 6L13 1.500V11Z" fill="#222" />
            <path d="M8 3v6M9.500 3v6M11 3v6" stroke="#222" />
          </svg>
        </button>
        <button type="button" aria-label="Crosshair">
          <svg width="19" height="16" viewBox="0 0 19 16" fill="none" stroke="#222" aria-hidden="true">
            <circle cx="10" cy="8" r="5" strokeWidth="1.300" />
            <path d="M10 0.500v15M2.500 8h15" />
          </svg>
        </button>
        <button type="button" aria-label="Pointer">
          <Cursor size={17} />
        </button>
      </div>
      <button type="button" className="relative ml-3 shrink-0 pr-2 text-[13px] leading-5 text-[#333]">
        Shared drawings
        <Corner className="absolute right-0 bottom-0.5" />
      </button>
      <button type="button" aria-label="Help" className="mx-[5px] flex h-[14px] w-[14px] shrink-0 items-center justify-center rounded-full bg-[#222] text-[11px] font-bold text-white">
        ?
      </button>
    </footer>
  )
}

export default function App() {
  return (
    <main className={`flex w-full flex-col overflow-hidden border-x border-[#98dcff] bg-[#f8f8f8] ${FONT}`}>
      <Toolbar />
      <StudyStrip cells={priceCells}>
        <svg width="18" height="19" viewBox="0 0 18 19" aria-hidden="true">
          <path d="M0 1.500h18M0 17.500h18" stroke="#222" strokeWidth="2" />
          <path d="M1 13.500C6 17 7 11 9 9S13 2.500 17 6" fill="none" stroke="#222" strokeWidth="1.300" />
        </svg>
      </StudyStrip>
      <PriceChart />
      <StudyStrip cells={poCells} />
      <OscillatorChart />
      <BottomBar />
    </main>
  )
}
